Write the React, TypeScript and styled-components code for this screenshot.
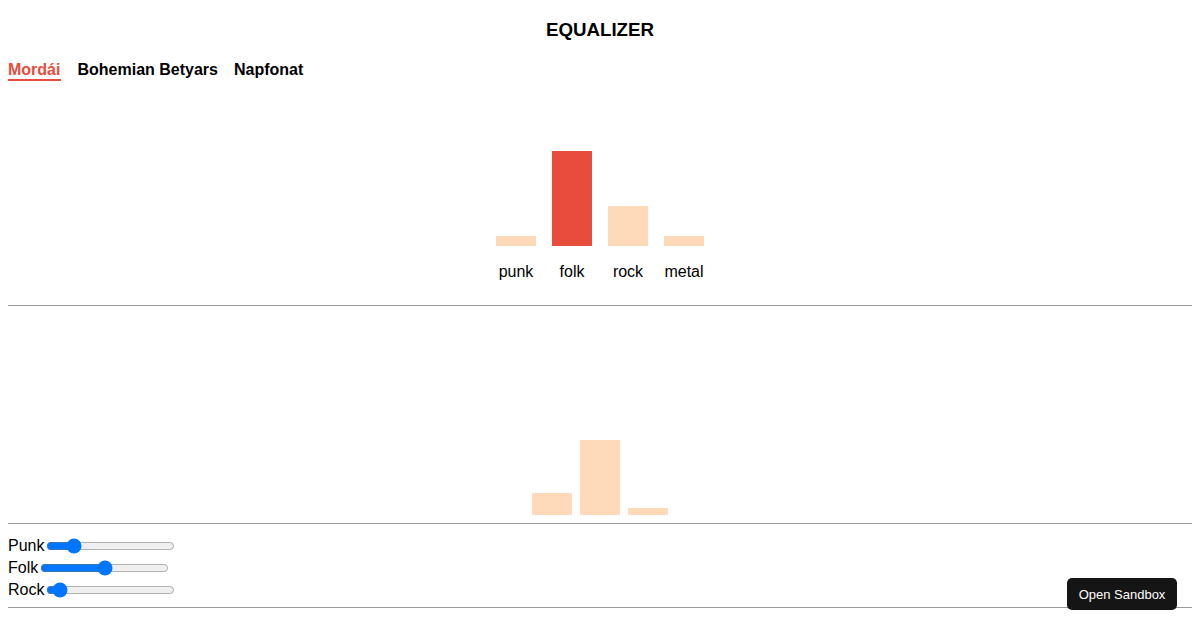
import React from 'react'
import styled, { createGlobalStyle } from 'styled-components'

const bands = [
  { name: 'punk', value: 10 },
  { name: 'folk', value: 95 },
  { name: 'rock', value: 40 },
  { name: 'metal', value: 10 },
]

const mix = [22, 75, 7]

const sliders = [
  { name: 'Punk', value: 17 },
  { name: 'Folk', value: 50 },
  { name: 'Rock', value: 5 },
]

function App() {
  return (
    <>
      <GlobalStyle />
      <Title>EQUALIZER</Title>
      <Tabs>
        <Tab active>Mordái</Tab>
        <Tab>Bohemian Betyars</Tab>
        <Tab>Napfonat</Tab>
      </Tabs>
      <Chart>
        {bands.map((b, i) => (
          <Column key={b.name}>
            <Bar highlight={i === 1} style={{ height: b.value }} />
            <Label>{b.name}</Label>
          </Column>
        ))}
      </Chart>
      <Rule />
      <MixChart>
        {mix.map((v, i) => (
          <Bar key={i} style={{ height: v }} />
        ))}
      </MixChart>
      <Rule />
      <Controls>
        {sliders.map((s) => (
          <SliderRow key={s.name}>
            {s.name}
            <Range type="range" min={0} max={100} defaultValue={s.value} />
          </SliderRow>
        ))}
      </Controls>
      <Rule />
      <SandboxButton>Open Sandbox</SandboxButton>
    </>
  )
}

export default App

const GlobalStyle = createGlobalStyle`
body {
  margin: 8px;
  font-family: "Liberation Sans", Arial, sans-serif;
  color: #000;
  background: #fff;
}
`

const Title = styled.h1`
  margin: 12px 0 0;
  font-size: 18.72px;
  line-height: 20px;
  font-weight: 700;
  text-align: center;
`

const Tabs = styled.nav`
  display: flex;
  gap: 16px;
  margin-top: 21px;
`

const Tab = styled.span<{ active?: boolean }>`
  font-size: 16px;
  line-height: 18px;
  font-weight: 700;
  padding-right: ${(p) => (p.active ? '1px' : '0')};
  color: ${(p) => (p.active ? '#e74c3c' : '#000')};
  border-bottom: 2px solid ${(p) => (p.active ? '#e74c3c' : 'transparent')};
`

const Chart = styled.div`
  display: flex;
  justify-content: center;
  align-items: flex-end;
  gap: 16px;
  height: 199px;
  margin-bottom: 25px;
`

const Column = styled.div`
  display: flex;
  flex-direction: column;
  align-items: center;
  width: 40px;
`

const Bar = styled.div<{ highlight?: boolean }>`
  width: 40px;
  background: ${(p) => (p.highlight ? '#e74c3c' : '#ffdab9')};
`

const Label = styled.div`
  margin-top: 17px;
  margin-bottom: -1px;
  font-size: 16px;
  line-height: 18px;
`

const Rule = styled.hr`
  margin: 0;
  border: none;
  border-top: 1px solid #999;
`

const MixChart = styled.div`
  display: flex;
  justify-content: center;
  align-items: flex-end;
  gap: 8px;
  height: 209px;
  margin-bottom: 8px;
`

const Controls = styled.div`
  display: flex;
  flex-direction: column;
  padding: 11px 0 6px;
`

const SliderRow = styled.label`
  display: flex;
  align-items: center;
  height: 22px;
  font-size: 16px;
`

const Range = styled.input`
  width: 129px;
  margin: 2px;
`

const SandboxButton = styled.button`
  position: fixed;
  right: 23px;
  bottom: 20px;
  width: 110px;
  height: 32px;
  border: none;
  border-radius: 5px;
  background: #151515;
  color: #fff;
  font-family: "Liberation Sans", Arial, sans-serif;
  font-size: 13px;
`
